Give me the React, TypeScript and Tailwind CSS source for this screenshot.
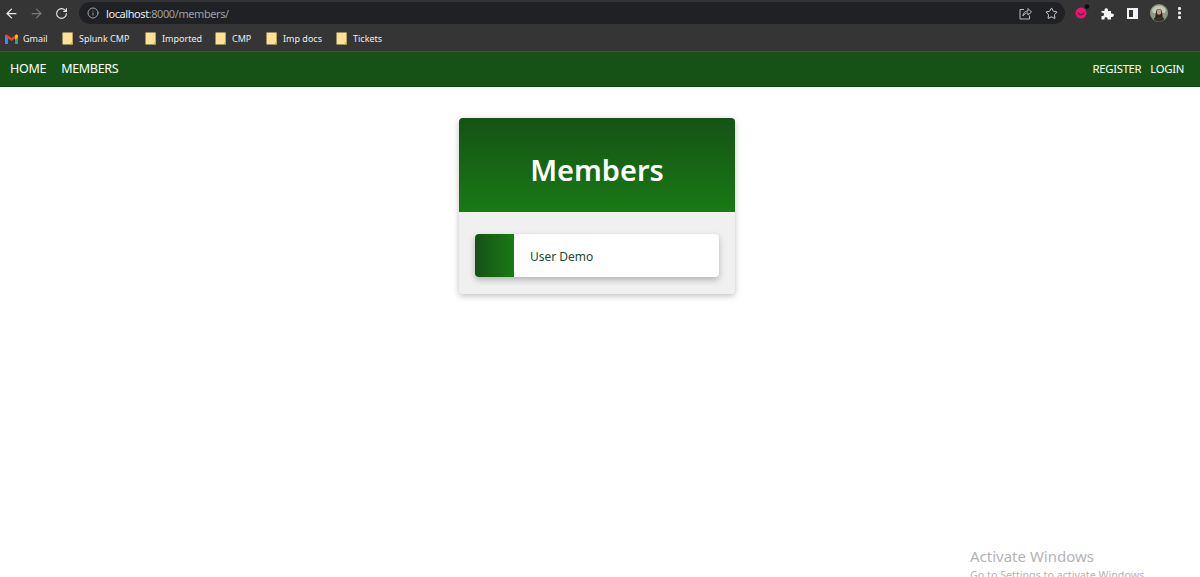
import React from "react";
import { ArrowLeft, ArrowRight, RotateCw, Info, Star } from "lucide-react";

const bookmarks = [
  { label: "Splunk CMP", width: "w-[51px]" },
  { label: "Imported", width: "w-[38px]" },
  { label: "CMP", width: "w-[19px]" },
  { label: "Imp docs", width: "w-[38px]" },
  { label: "Tickets", width: "w-[29px]" },
];

function Folder() {
  return (
    <svg width="11" height="13" viewBox="0 0 11 13" className="shrink-0">
      <path d="M0.5 0.5H10.5V12.5H0.5Z" fill="#fde293" />
      <path d="M8 12.5H10.5V9.5Z" fill="#c9a94f" />
      <path d="M10 0.5H10.5V12.5H10Z" fill="#d9b95c" />
    </svg>
  );
}

function GmailIcon() {
  return (
    <svg width="13" height="10" viewBox="0 0 13 10" className="shrink-0">
      <path d="M0 1.5V10H3V4.5L6.5 7L10 4.5V10H13V1.5L11.5 0.2L6.5 4L1.5 0.2Z" fill="#ea4335" />
      <path d="M0 1.5V10H3V4Z" fill="#4285f4" />
      <path d="M13 1.5V10H10V4Z" fill="#34a853" />
      <path d="M10 1.5L11.5 0.2L13 1.5V3.5L10 5.5Z" fill="#fbbc04" />
    </svg>
  );
}

function ShareIcon() {
  return (
    <svg width="13" height="13" viewBox="0 0 13 13" fill="none" stroke="#b9bbbe" strokeWidth="1">
      <path d="M5 2.5H1V12H10.5V8.5" />
      <path d="M4 9C4 5.5 6.5 4 9 4V1.5L12.5 5L9 8V6C7 6 5.2 6.8 4 9Z" />
    </svg>
  );
}

function PuzzleIcon() {
  return (
    <svg width="13" height="13" viewBox="0 0 13 13" className="shrink-0">
      <path
        d="M0.5 4H3.5V3C3.5 0.5 7 0.5 7 3V4H10V6.5H11C13.5 6.5 13.5 10 11 10H10V12.5H6.5V11.5C6.5 9.7 3.5 9.7 3.5 11.5V12.5H0.5V9H1.5C3.6 9 3.6 5.8 1.5 5.8H0.5Z"
        fill="#f1f3f4"
      />
    </svg>
  );
}

function Extension() {
  return (
    <svg width="15" height="15" viewBox="0 0 15 15" className="mt-[-3px] shrink-0">
      <circle cx="6" cy="9" r="5.5" fill="#e8176f" />
      <path d="M3 8.5C4 11.5 8 11.5 9 8.5" fill="none" stroke="#7d1747" strokeWidth="1.4" />
      <circle cx="12" cy="2.5" r="2.3" fill="#0c0c0c" />
    </svg>
  );
}

function Dots() {
  return (
    <svg width="3" height="12" viewBox="0 0 3 12" className="shrink-0">
      <rect x="0" y="0" width="3" height="3" rx="1" fill="#e8eaed" />
      <rect x="0" y="4.5" width="3" height="3" rx="1" fill="#e8eaed" />
      <rect x="0" y="9" width="3" height="3" rx="1" fill="#e8eaed" />
    </svg>
  );
}

function Avatar() {
  return (
    <svg width="18" height="18" viewBox="0 0 18 18" className="shrink-0">
      <circle cx="9" cy="9" r="9" fill="#8d9a83" />
      <path d="M2 6C4 1 13 0 16 6L15 9H3Z" fill="#c5c9b7" />
      <path d="M6 8C6 4 12 4 12 8L13 15H5Z" fill="#2b2622" />
      <ellipse cx="9" cy="8" rx="2.2" ry="2.8" fill="#c49a7f" />
      <path d="M3.5 15C5 12 13 12 14.5 15C12 18.6 6 18.6 3.5 15Z" fill="#33302e" />
    </svg>
  );
}

export default function App() {
  return (
    <div className="relative flex h-[577px] w-[1200px] flex-col overflow-hidden bg-white font-['Noto_Sans','Open_Sans',sans-serif]">
      {/* Browser toolbar */}
      <div className="flex h-[26px] items-center bg-[#353535] pl-[4px]">
        <ArrowLeft size={15} strokeWidth={2} color="#e8eaed" />
        <ArrowRight size={15} strokeWidth={2} color="#77797c" className="ml-[10px]" />
        <RotateCw size={13} strokeWidth={2} color="#e8eaed" className="ml-[11px]" />
        <div className="ml-[11px] flex h-[22px] w-[986px] items-center rounded-full bg-[#202124] pl-[8px] pr-[7px]">
          <Info size={12} strokeWidth={1.5} color="#c4c7c5" />
          <div className="ml-[7px] text-[11px] leading-none tracking-[-0.42px] text-[#e8eaed]">
            localhost<span className="text-[#9aa0a6]">:8000/members/</span>
          </div>
          <div className="ml-auto flex items-center gap-[13px]">
            <ShareIcon />
            <Star size={13} strokeWidth={1.6} color="#e8eaed" />
          </div>
        </div>
        <div className="ml-[10px]">
          <Extension />
        </div>
        <div className="ml-[11px]">
          <PuzzleIcon />
        </div>
        <div className="ml-[13px] h-[11px] w-[11px] border-y-[2px] border-l-[2px] border-r-[5px] border-[#f1f3f4]" />
        <div className="ml-[12px]">
          <Avatar />
        </div>
        <div className="ml-[10px]">
          <Dots />
        </div>
      </div>

      {/* Bookmarks bar */}
      <div className="flex h-[26px] items-center border-b border-[#4a4b4d] bg-[#353535] pl-[5px] text-[9px] leading-none text-[#eceef0]">
        <GmailIcon />
        <span className="ml-[5px] w-[24px] whitespace-nowrap">Gmail</span>
        {bookmarks.map((b) => (
          <div key={b.label} className="ml-[15px] flex items-center gap-[6px]">
            <Folder />
            <span className={`${b.width} whitespace-nowrap`}>{b.label}</span>
          </div>
        ))}
      </div>

      {/* Navbar */}
      <nav className="flex h-[35px] items-center justify-between border-b border-[#0d4a10] bg-[#165215] px-[10px] pt-[1px] text-white">
        <div className="flex items-center gap-[15px] text-[12.5px] tracking-[-0.3px]">
          <a>HOME</a>
          <a>MEMBERS</a>
        </div>
        <div className="mr-[6px] flex items-center gap-[9px] text-[11.3px] tracking-[-0.3px]">
          <a>REGISTER</a>
          <a>LOGIN</a>
        </div>
      </nav>

      {/* Content */}
      <main className="flex flex-1 justify-center pt-[31px]">
        <div className="ml-[-6px] h-[176px] w-[276px] overflow-hidden rounded-[4px] bg-[#f0f0f0] shadow-[0_2px_6px_rgba(0,0,0,0.25)]">
          <div className="flex h-[94px] items-center justify-center bg-gradient-to-b from-[#165215] to-[#187a15] pt-[8px] text-[29px] font-semibold leading-none text-white">
            Members
          </div>
          <div className="px-[16px] pt-[22px]">
            <div className="flex h-[43px] w-[244px] items-center overflow-hidden rounded-[4px] bg-white shadow-[0_3px_6px_rgba(0,0,0,0.25)]">
              <div className="h-full w-[39px] bg-gradient-to-r from-[#165215] to-[#187a15]" />
              <span className="ml-[16px] pt-[2px] text-[12px] tracking-[-0.02px] text-[#1b4a2a]">User Demo</span>
            </div>
          </div>
        </div>
      </main>

      {/* OS watermark */}
      <div className="absolute left-[970px] top-[546px] text-[15px] leading-[20px] text-[#b4b4b4]">
        Activate Windows
        <div className="pt-[2px] text-[10.7px] leading-[15px]">Go to Settings to activate Windows.</div>
      </div>
    </div>
  );
}
